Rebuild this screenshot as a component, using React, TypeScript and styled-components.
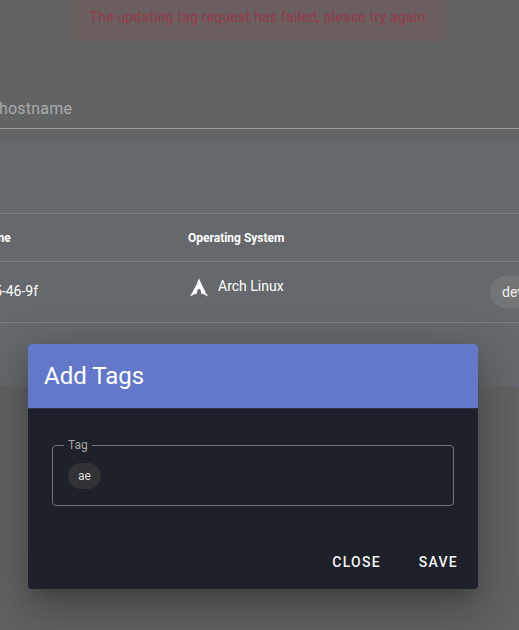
import React from "react";
import styled, { createGlobalStyle } from "styled-components";

const GlobalStyle = createGlobalStyle`
  html, body {
    margin: 0;
    padding: 0;
    height: 100%;
    background: #626262;
    font-family: Roboto, "Liberation Sans", sans-serif;
  }
`;

const Page = styled.div`
  position: relative;
  width: 519px;
  height: 630px;
  overflow: hidden;
  background: #626262;
`;

const Alert = styled.div`
  width: 373px;
  height: 41px;
  margin-left: 73px;
  background: #6a5e5e;
  border-radius: 0 0 4px 4px;
  color: #983a48;
  font-size: 14px;
  line-height: 34px;
  text-align: center;
  letter-spacing: 0.22px;
`;

const SearchBox = styled.div`
  height: 88px;
  box-sizing: border-box;
  border-bottom: 1px solid #9c9d9d;
  padding-top: 58px;
  background: #626364;
  color: #a9aaaa;
  font-size: 16px;
  line-height: 20px;
  letter-spacing: 0.2px;
`;

const SearchRow = styled.div`
  margin-left: -1px;
`;

const Gap = styled.div`
  height: 12px;
  background: #626364;
`;

const Panel = styled.section`
  height: 246px;
  background: #65686c;
`;

const Toolbar = styled.div`
  height: 73px;
  border-bottom: 1px solid #7b7d80;
  box-sizing: border-box;
`;

const HeadRow = styled.div`
  display: grid;
  grid-template-columns: 188px 1fr;
  height: 48px;
  box-sizing: border-box;
  border-bottom: 1px solid #7b7d80;
  align-items: center;
  color: #fff;
  font-size: 12px;
  font-weight: 700;
`;

const BodyRow = styled.div`
  display: grid;
  grid-template-columns: 188px 302px 80px;
  height: 61px;
  box-sizing: border-box;
  border-bottom: 1px solid #7b7d80;
  color: #fff;
  font-size: 14px;
`;

const ClippedCell = styled.div<{ $top: number }>`
  overflow: hidden;
  white-space: nowrap;
  padding-top: ${({ $top }) => $top}px;
`;

const ShiftedText = styled.span<{ $shift: number }>`
  display: inline-block;
  margin-left: ${({ $shift }) => $shift}px;
`;

const OsCell = styled.div`
  display: flex;
  align-items: flex-start;
  padding-top: 14px;
  gap: 9px;
  line-height: 20px;
`;

const ArchIcon = styled.svg`
  width: 19px;
  height: 19px;
  margin-left: 2px;
  margin-top: 1.5px;
  fill: #fff;
  flex: none;
`;

const RowChip = styled.div`
  height: 32px;
  width: 80px;
  margin-top: 14px;
  border-radius: 16px;
  background: #737475;
  padding-left: 12px;
  box-sizing: border-box;
  line-height: 32px;
  font-size: 14px;
  color: #f0f0f0;
`;

const Dialog = styled.div`
  position: absolute;
  left: 28px;
  top: 344px;
  width: 450px;
  height: 245px;
  border-radius: 4px;
  background: #1e2129;
  overflow: hidden;
  box-shadow: 0 11px 15px -7px rgba(0, 0, 0, 0.2),
    0 24px 38px 3px rgba(0, 0, 0, 0.14), 0 9px 46px 8px rgba(0, 0, 0, 0.12);
  display: flex;
  flex-direction: column;
`;

const DialogHeader = styled.header`
  height: 65px;
  box-sizing: border-box;
  padding: 16px 16px 0;
  background: #6378c9;
  border-bottom: 1px solid #2f3546;
  color: #fff;
  font-size: 24px;
  line-height: 32px;
`;

const DialogBody = styled.div`
  flex: 1;
  padding: 29px 24px 0;
`;

const TagField = styled.fieldset`
  margin: 0;
  height: 68px;
  box-sizing: border-box;
  border: 1px solid #72747a;
  border-radius: 4px;
  padding: 11px 15px 0;
`;

const TagLegend = styled.legend`
  padding: 0 4px;
  margin-left: -4px;
  font-size: 12px;
  line-height: 14px;
  color: #a5a6aa;
`;

const TagChip = styled.div`
  display: inline-block;
  height: 26px;
  width: 33px;
  border-radius: 13px;
  background: #303236;
  color: #dcdcdd;
  font-size: 12px;
  line-height: 26px;
  text-align: center;
`;

const Actions = styled.footer`
  display: flex;
  justify-content: flex-end;
  gap: 38px;
  padding: 0 20px 17px;
`;

const ActionButton = styled.button`
  border: none;
  background: transparent;
  padding: 0;
  color: #f4f4f5;
  font-family: inherit;
  font-size: 14px;
  font-weight: 500;
  line-height: 20px;
  letter-spacing: 1.25px;
`;

export default function App() {
  return (
    <Page>
      <GlobalStyle />
      <Alert>The updating tag request has failed, please try again.</Alert>
      <SearchBox>
        <SearchRow>hostname</SearchRow>
      </SearchBox>
      <Gap />
      <Panel>
        <Toolbar />
        <HeadRow>
          <ClippedCell $top={0}>
            <ShiftedText $shift={-21}>Name</ShiftedText>
          </ClippedCell>
          <div>Operating System</div>
        </HeadRow>
        <BodyRow>
          <ClippedCell $top={21}>
            <ShiftedText $shift={-6}>5-46-9f</ShiftedText>
          </ClippedCell>
          <OsCell>
            <ArchIcon viewBox="0 0 24 24">
              <path d="M11.39.605C10.376 3.092 9.764 4.72 8.635 7.132c.693.734 1.543 1.589 2.923 2.554-1.484-.61-2.496-1.224-3.252-1.86C6.86 10.842 4.596 15.138 0 23.395c3.612-2.085 6.412-3.37 9.021-3.862a6.61 6.61 0 01-.171-1.547l.003-.115c.058-2.315 1.261-4.095 2.687-3.973 1.426.12 2.534 2.096 2.478 4.409a6.52 6.52 0 01-.146 1.243c2.58.505 5.352 1.787 8.914 3.844-.702-1.293-1.33-2.459-1.929-3.57-.943-.73-1.926-1.682-3.933-2.713 1.38.359 2.367.772 3.137 1.234-6.09-11.334-6.582-12.84-8.67-17.74z" />
            </ArchIcon>
            Arch Linux
          </OsCell>
          <RowChip>dev</RowChip>
        </BodyRow>
      </Panel>
      <Dialog>
        <DialogHeader>Add Tags</DialogHeader>
        <DialogBody>
          <TagField>
            <TagLegend>Tag</TagLegend>
            <TagChip>ae</TagChip>
          </TagField>
        </DialogBody>
        <Actions>
          <ActionButton>CLOSE</ActionButton>
          <ActionButton>SAVE</ActionButton>
        </Actions>
      </Dialog>
    </Page>
  );
}
